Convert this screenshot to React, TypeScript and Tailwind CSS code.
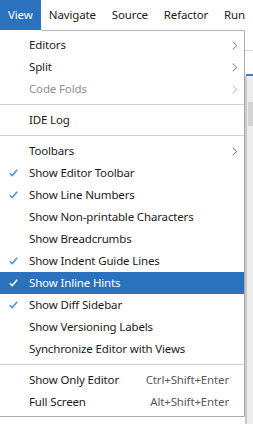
import React from "react";

type Item =
  | { type: "sep" }
  | {
      type: "item";
      label: string;
      sub?: boolean;
      disabled?: boolean;
      checked?: boolean;
      selected?: boolean;
      shortcut?: string;
    };

const items: Item[] = [
  { type: "item", label: "Editors", sub: true },
  { type: "item", label: "Split", sub: true },
  { type: "item", label: "Code Folds", sub: true, disabled: true },
  { type: "sep" },
  { type: "item", label: "IDE Log" },
  { type: "sep" },
  { type: "item", label: "Toolbars", sub: true },
  { type: "item", label: "Show Editor Toolbar", checked: true },
  { type: "item", label: "Show Line Numbers", checked: true },
  { type: "item", label: "Show Non-printable Characters" },
  { type: "item", label: "Show Breadcrumbs" },
  { type: "item", label: "Show Indent Guide Lines", checked: true },
  { type: "item", label: "Show Inline Hints", checked: true, selected: true },
  { type: "item", label: "Show Diff Sidebar", checked: true },
  { type: "item", label: "Show Versioning Labels" },
  { type: "item", label: "Synchronize Editor with Views" },
  { type: "sep" },
  { type: "item", label: "Show Only Editor", shortcut: "Ctrl+Shift+Enter" },
  { type: "item", label: "Full Screen", shortcut: "Alt+Shift+Enter" },
];

function Check({ white }: { white?: boolean }) {
  return (
    <svg width="9" height="8" viewBox="0 0 9 8" className="block">
      <path
        d="M0.8 4.2 L3.2 6.6 L8.2 0.8"
        fill="none"
        stroke={white ? "#ffffff" : "#4a90d9"}
        strokeWidth="1.5"
      />
    </svg>
  );
}

function Chevron({ disabled }: { disabled?: boolean }) {
  return (
    <svg width="6" height="9" viewBox="0 0 6 9" className="block">
      <path
        d="M0.8 0.6 L4.8 4.5 L0.8 8.4"
        fill="none"
        stroke={disabled ? "#b4b4b4" : "#6a6a6a"}
        strokeWidth="1"
      />
    </svg>
  );
}

export default function App() {
  return (
    <div
      className="relative w-[253px] h-[424px] overflow-hidden bg-white text-[11.5px] tracking-[-0.15px] text-[#1b1b1b]"
      style={{ fontFamily: '"Noto Sans", "Open Sans", sans-serif' }}
    >
      {/* Menu bar */}
      <div className="flex h-[30px] items-center bg-white whitespace-nowrap">
        <div className="flex h-full items-center bg-[#2a72be] px-[8px] w-[41px] text-white">View</div>
        <div className="flex h-full items-center px-[8px]">Navigate</div>
        <div className="flex h-full items-center px-[8px]">Source</div>
        <div className="flex h-full items-center px-[8px]">Refactor</div>
        <div className="flex h-full items-center px-[8px]">Run</div>
      </div>

      <div className="flex">
        {/* Popup */}
        <div className="w-[245px] shrink-0 flex flex-col">
          <div className="flex h-px">
            <div className="w-[41px]" />
            <div className="flex-1 bg-[#b9b9b9]" />
          </div>
          <div className="border-r border-b border-[#a9a9a9] bg-white pt-[3px] pb-[3px]">
            {items.map((it, i) =>
              it.type === "sep" ? (
                <div key={i} className="pt-[4px] pb-[4px]">
                  <div className="h-px bg-[#cfcfcf]" />
                </div>
              ) : (
                <div
                  key={i}
                  className={
                    "flex h-[22px] items-center whitespace-nowrap " +
                    (it.selected ? "bg-[#2a72be] text-white" : "")
                  }
                >
                  <div className="w-[29px] shrink-0 flex justify-end pr-[11px]">
                    {it.checked ? <Check white={it.selected} /> : null}
                  </div>
                  <div className={"flex-1 " + (it.disabled ? "text-[#8f8f8f]" : "")}>{it.label}</div>
                  {it.shortcut ? (
                    <div className="pr-[15px] text-[#5a5a5a]">{it.shortcut}</div>
                  ) : null}
                  {it.sub ? (
                    <div className="pr-[6px]">
                      <Chevron disabled={it.disabled} />
                    </div>
                  ) : null}
                </div>
              )
            )}
          </div>
          <div className="h-[7px]" />
        </div>

        {/* Background strip on the right */}
        <div className="flex-1 flex flex-col">
          <div className="h-[20px] bg-white" />
          <div className="h-px bg-[#d6d6d6]" />
          <div className="h-[23px] bg-white" />
          <div className="h-[2px] bg-[#3d7fc9] ml-[1px]" />
          <div className="flex flex-1">
            <div className="w-[2px] bg-[#c9c9c9]" />
            <div className="flex-1 flex flex-col bg-[#ececec]">
              <div className="h-[26px]" />
              <div className="h-[24px] bg-[#d4d4d4] ml-[1px]" />
              <div className="flex-1" />
            </div>
          </div>
        </div>
      </div>
    </div>
  );
}
